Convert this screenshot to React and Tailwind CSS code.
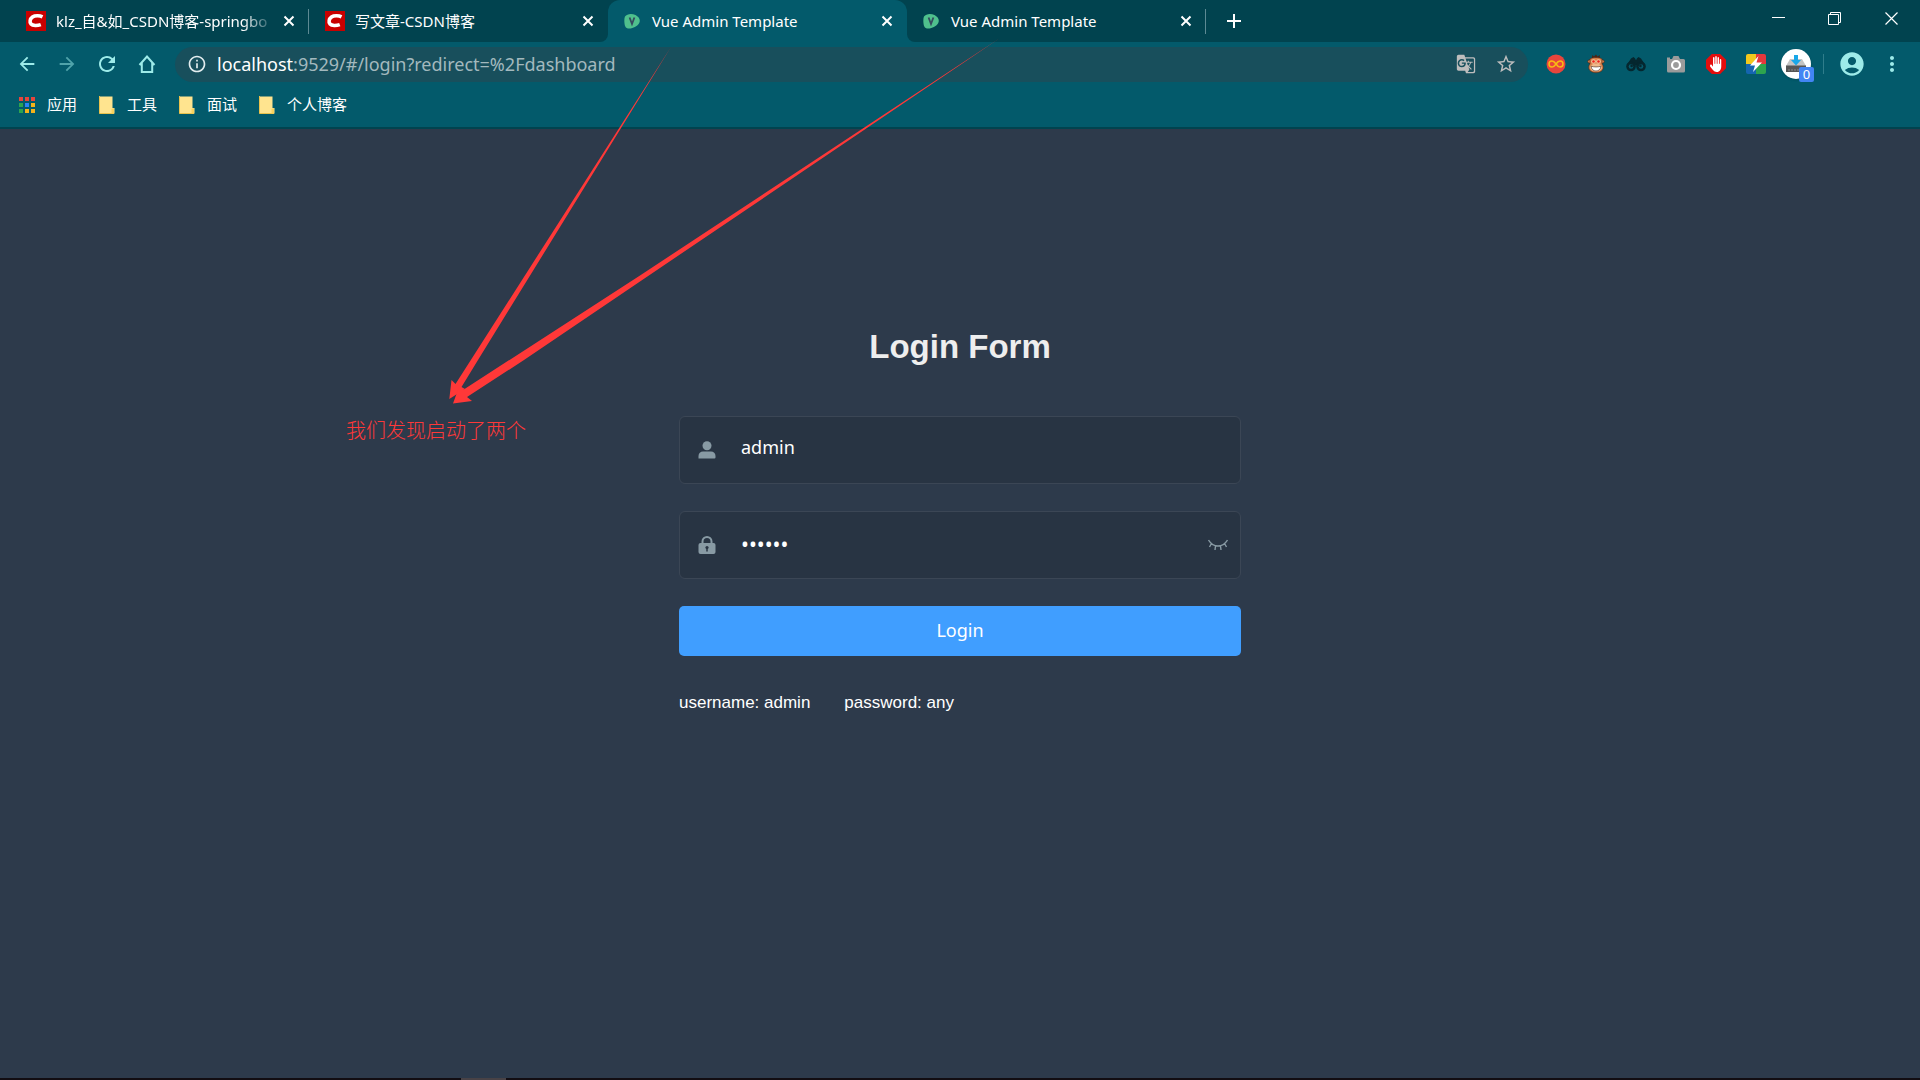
import React from "react";
import { MdArrowBack, MdArrowForward, MdRefresh, MdGTranslate, MdStarBorder, MdAccountCircle, MdMoreVert, MdInfoOutline } from "react-icons/md";
import { FaHand } from "react-icons/fa6";

function CsdnIcon() {
  return (
    <svg viewBox="0 0 20 20" className="size-5 shrink-0" aria-hidden="true">
      <rect width="20" height="20" fill="#c90000" />
      <path d="M16.500 5.800C14 4.600 9 4.300 6.500 6 4 7.800 3.300 11.200 5 13c1.700 2 6.500 1.800 9.800.6" fill="none" stroke="#fff" strokeWidth="3.600" />
    </svg>
  );
}

function VueIcon() {
  return (
    <svg viewBox="0 0 16 16" className="mr-0.5 size-4 shrink-0" aria-hidden="true">
      <path d="M1 3.500C3 .5 8 .2 11.500 2c2.500 1.300 4.500 3.500 4.300 6-.3 3.500-4 6-7.500 7-3 .9-6 .8-7-1.500C.2 11 0 5.500 1 3.500Z" fill="#4fc08d" />
      <path d="M5.600 4.500 8 11l2.400-6.500" fill="none" stroke="#35495e" strokeWidth="1.800" />
    </svg>
  );
}

function CloseIcon() {
  return (
    <svg viewBox="0 0 12 12" className="size-3" aria-hidden="true">
      <path d="m1.500 1.500 9 9m0-9-9 9" stroke="#fff" strokeWidth="2" />
    </svg>
  );
}

function Tab({ icon, title, active, divider, fade }) {
  return (
    <div className={"relative flex h-full w-[299px] shrink-0 items-center pl-4 " + (active ? "rounded-t-xl bg-[#035a6b]" : "")}>
      {icon}
      <button
        type="button"
        className={"ml-2.5 flex-1 text-left whitespace-nowrap text-white " + (fade ? "[mask-image:linear-gradient(to_right,#000_85%,transparent)]" : "")}
      >
        {title}
      </button>
      <button type="button" aria-label="Close tab" className="mr-2.5 ml-1 flex size-5 items-center justify-center">
        <CloseIcon />
      </button>
      {divider && <span className="absolute top-[9px] right-0 h-[25px] w-px bg-[#5d8a94]" />}
    </div>
  );
}

function TabStrip() {
  return (
    <div className="flex h-[42px] bg-[#035a6b] text-[15px]">
      <div className="flex shrink-0 rounded-br-lg bg-[#01434f] pl-2.5">
        <Tab icon={<CsdnIcon />} title="klz_自&如_CSDN博客-springbo" divider fade />
        <Tab icon={<CsdnIcon />} title="写文章-CSDN博客" />
      </div>
      <div className="shrink-0 bg-[#01434f]">
        <Tab icon={<VueIcon />} title="Vue Admin Template" active />
      </div>
      <div className="flex flex-1 rounded-bl-lg bg-[#01434f]">
        <Tab icon={<VueIcon />} title="Vue Admin Template" divider />
        <button type="button" aria-label="New tab" className="ml-4 flex w-6 items-center justify-center">
          <svg viewBox="0 0 16 16" className="size-4" aria-hidden="true">
            <path d="M8 1v14M1 8h14" stroke="#fff" strokeWidth="2" />
          </svg>
        </button>
        <div className="ml-auto flex h-9">
          <button type="button" aria-label="Minimize" className="flex w-14 items-center justify-center">
            <svg viewBox="0 0 13 13" className="size-[13px]" aria-hidden="true"><path d="M0 5.500h13" stroke="#fff" /></svg>
          </button>
          <button type="button" aria-label="Restore" className="flex w-14 items-center justify-center">
            <svg viewBox="0 0 13 13" className="size-[13px]" aria-hidden="true">
              <path d="M.5 2.500h10v10H.5zM2.500 2V.5h10v10H11" fill="none" stroke="#fff" />
            </svg>
          </button>
          <button type="button" aria-label="Close window" className="flex w-[58px] items-center justify-center">
            <svg viewBox="0 0 13 13" className="size-[13px]" aria-hidden="true"><path d="m.5.5 12 12m0-12-12 12" stroke="#fff" strokeWidth="1.200" /></svg>
          </button>
        </div>
      </div>
    </div>
  );
}

function NavButton({ label, children }) {
  return (
    <button type="button" aria-label={label} className="flex size-10 shrink-0 items-center justify-center text-[#9debe9]">
      {children}
    </button>
  );
}

function InfinityIcon() {
  return (
    <svg viewBox="0 0 20 20" className="size-5" aria-hidden="true">
      <circle cx="10" cy="10" r="9.500" fill="#e8453c" />
      <path d="M10 10C8.500 7.800 7.400 7 6 7a3 3 0 0 0 0 6c1.400 0 2.500-.8 4-3s2.600-3 4-3a3 3 0 0 1 0 6c-1.400 0-2.500-.8-4-3Z" fill="none" stroke="#f9bd12" strokeWidth="1.500" />
    </svg>
  );
}

function MonkeyIcon() {
  return (
    <svg viewBox="0 0 20 20" className="size-5" aria-hidden="true">
      <path d="m6 4 0-3 2 1.500L10 .5l1.500 2 2.500-1.500-.5 3Z" fill="#4a2515" />
      <circle cx="3.500" cy="7.500" r="1.700" fill="#e08a55" stroke="#4a2515" strokeWidth=".7" />
      <circle cx="16.500" cy="7.500" r="1.700" fill="#e08a55" stroke="#4a2515" strokeWidth=".7" />
      <path d="M4 5c2-2 10-2 12 0v5c2 2 1.500 5.500-.5 7-3 2.200-8 2.200-11 0-2-1.500-2.500-5-.5-7Z" fill="#d98049" stroke="#4a2515" strokeWidth=".6" />
      <circle cx="7.500" cy="7.500" r="2.300" fill="#f5c9a3" />
      <circle cx="12.500" cy="7.500" r="2.300" fill="#f5c9a3" />
      <ellipse cx="10" cy="13.500" rx="6" ry="4" fill="#f0b98c" />
      <circle cx="7.500" cy="7.500" r="1.300" fill="#f0221b" />
      <circle cx="12.500" cy="7.500" r="1.300" fill="#f0221b" />
      <path d="M5 12.200c3 1 7 1 10 0-.5 3.300-2.500 4.800-5 4.800s-4.500-1.500-5-4.800Z" fill="#fff" stroke="#4a2515" strokeWidth=".6" />
    </svg>
  );
}

function BinocularsIcon() {
  return (
    <svg viewBox="0 0 20 16" className="h-4 w-5" aria-hidden="true">
      <path d="M5 2.500 7.500 1l1.700 1.500v1h1.600v-1L12.500 1 15 2.500l4 6v4h-7l-1-3H9l-1 3H1v-4Z" fill="#05272f" />
      <circle cx="5" cy="10.500" r="4.800" fill="#05272f" />
      <circle cx="15" cy="10.500" r="4.800" fill="#05272f" />
      <circle cx="5" cy="10.500" r="2.300" fill="#075a6c" />
      <circle cx="15" cy="10.500" r="2.300" fill="#075a6c" />
      <circle cx="5.600" cy="9.900" r="1.300" fill="#05272f" />
      <circle cx="14.400" cy="9.900" r="1.300" fill="#05272f" />
    </svg>
  );
}

function CameraIcon() {
  return (
    <svg viewBox="0 0 20 18" className="h-[18px] w-5" aria-hidden="true">
      <path d="M1 5V2.500h3V4h2l1.500-3h5L14 4h3.500A1.500 1.500 0 0 1 19 5.500V16a1.500 1.500 0 0 1-1.500 1.500h-15A1.500 1.500 0 0 1 1 16Z" fill="#9b9b9b" />
      <circle cx="10" cy="10" r="4" fill="#9b9b9b" stroke="#fff" strokeWidth="2.200" />
    </svg>
  );
}

function StopIcon() {
  return (
    <span className="flex size-5 items-center justify-center bg-[#e40d0d] [clip-path:polygon(29%_0,71%_0,100%_29%,100%_71%,71%_100%,29%_100%,0_71%,0_29%)]">
      <FaHand className="h-4 w-3 text-white" preserveAspectRatio="none" />
    </span>
  );
}

function BoltIcon() {
  return (
    <svg viewBox="0 0 20 20" className="size-5" aria-hidden="true">
      <clipPath id="bolt-tile"><rect width="20" height="20" rx="2" /></clipPath>
      <g clipPath="url(#bolt-tile)">
        <path d="M0 0h10v10H0z" fill="#f2c81d" />
        <path d="M10 0h10v10H10z" fill="#e5373c" />
        <path d="M0 10h10v10H0z" fill="#1565b0" />
        <path d="M10 10h10v10H10z" fill="#2da44e" />
      </g>
      <path d="M12.500 2 4 11.500h5L7 18l9-9.500h-5.500Z" fill="#fff" />
    </svg>
  );
}

function DownloadIcon() {
  return (
    <span className="relative flex size-[30px] items-center justify-center rounded-full bg-white shadow">
      <svg viewBox="0 0 20 18" className="h-[18px] w-5" aria-hidden="true">
        <path d="M4 4h12l4 7H0Z" fill="#c4c4c4" />
        <path d="M0 10.500h20V17H0z" fill="#555" />
        <path d="M2 15h12" stroke="#8b8b8b" strokeDasharray="2 1" />
        <path d="M8 0h4v5h3l-5 5.500L5 5h3Z" fill="#19a7e8" />
      </svg>
      <span className="absolute top-[18px] left-[18px] flex h-[15px] w-[15px] items-center justify-center rounded-xs bg-[#4285f4] text-[13px] leading-none text-white">0</span>
    </span>
  );
}

const extensions = [
  ["Infinity", InfinityIcon],
  ["Monkey", MonkeyIcon],
  ["Binoculars", BinocularsIcon],
  ["Screenshot", CameraIcon],
  ["Blocker", StopIcon],
  ["Speed", BoltIcon],
  ["Downloads", DownloadIcon],
];

function Toolbar() {
  return (
    <div className="flex h-[46px] items-center bg-[#035a6b] pr-2 pb-0.5 pl-[7px]">
      <NavButton label="Back"><MdArrowBack className="size-[22px]" /></NavButton>
      <NavButton label="Forward"><MdArrowForward className="size-[22px] opacity-50" /></NavButton>
      <NavButton label="Reload"><MdRefresh className="size-6" /></NavButton>
      <NavButton label="Home">
        <svg viewBox="0 0 20 20" className="size-5" aria-hidden="true">
          <path d="M2.500 11 10 2.500l7.500 8.500M4.800 9v9h10.400V9" fill="none" stroke="currentColor" strokeWidth="2" />
        </svg>
      </NavButton>
      <div className="ml-2 flex h-[35px] flex-1 items-center rounded-full bg-[#184f5c] pl-3">
        <MdInfoOutline className="size-5 shrink-0 text-[#e3edef]" />
        <button type="button" className="ml-2.5 flex-1 text-left text-lg whitespace-nowrap text-[#a3b9be]">
          <span className="text-white">localhost</span>:9529/#/login?redirect=%2Fdashboard
        </button>
        <button type="button" aria-label="Translate" className="flex size-10 items-center justify-center text-[#bdbdbd]"><MdGTranslate className="size-5" /></button>
        <button type="button" aria-label="Bookmark" className="mr-0.5 flex size-10 items-center justify-center text-[#bdbdbd]"><MdStarBorder className="size-[22px]" /></button>
      </div>
      <div className="ml-2 flex items-center">
        {extensions.map(([name, Icon]) => (
          <button key={name} type="button" aria-label={name} className="flex size-10 items-center justify-center"><Icon /></button>
        ))}
      </div>
      <span className="mr-2 ml-[7px] h-5 w-px bg-[#2f7d8b]" />
      <NavButton label="Profile"><MdAccountCircle className="size-7" /></NavButton>
      <NavButton label="Menu"><MdMoreVert className="size-6" /></NavButton>
    </div>
  );
}

const appColors = ["#e8453c", "#e8453c", "#e8453c", "#2da44e", "#2a84f5", "#f4b31a", "#2da44e", "#f4b31a", "#f4b31a"];

function AppsIcon() {
  return (
    <span className="grid size-4 grid-cols-3 gap-0.5">
      {appColors.map((color, i) => (
        <span key={i} style={{ background: color }} />
      ))}
    </span>
  );
}

function FolderIcon() {
  return (
    <svg viewBox="0 0 16 18" className="h-[18px] w-4" aria-hidden="true">
      <path d="M.5.500h13v11.500l2 0v5.500H.5z" fill="#ffe48f" />
      <path d="M.5 0v17.500H15" fill="none" stroke="#e9c24d" />
      <path d="M12.500 17.500V13l2.500-1v5.500Z" fill="#f7d260" />
    </svg>
  );
}

function BookmarksBar() {
  return (
    <nav className="flex h-[41px] items-center gap-[22px] border-b-2 border-[#01434f] bg-[#035a6b] pb-1.5 pl-[19px] text-[15px] text-white">
      <a href="#apps" className="flex items-center gap-3"><AppsIcon />应用</a>
      <a href="#tools" className="flex items-center gap-3"><FolderIcon />工具</a>
      <a href="#interview" className="flex items-center gap-3"><FolderIcon />面试</a>
      <a href="#blog" className="flex items-center gap-3"><FolderIcon />个人博客</a>
    </nav>
  );
}

function Field({ icon, children }) {
  return (
    <div className="mb-[27px] flex h-[68px] items-center rounded-md border border-[#3b4655] bg-[#283443] pr-3 pb-0.5 pl-[18px] text-[#889aa4]">
      {icon}
      {children}
    </div>
  );
}

function LoginForm() {
  return (
    <form className="mx-auto w-full max-w-[562px] pt-[193px]" onSubmit={(e) => e.preventDefault()}>
      <h1 className="mb-[45px] text-center font-['Liberation_Sans',Arial,sans-serif] text-[33px] leading-[49px] font-bold text-[#eee]">Login Form</h1>
      <Field
        icon={
          <svg viewBox="0 0 18 18" className="mt-0.5 size-[18px] shrink-0" fill="currentColor" aria-hidden="true">
            <circle cx="9" cy="4.800" r="4.500" />
            <path d="M.5 17.500v-2.500c0-3 2-4.500 4.500-4.500h8c2.500 0 4.500 1.500 4.500 4.500v1.500a1 1 0 0 1-1 1Z" />
          </svg>
        }
      >
        <input type="text" aria-label="Username" defaultValue="admin" className="mb-1 ml-[25px] h-14 min-w-0 flex-1 bg-transparent text-lg text-white outline-none" />
      </Field>
      <Field
        icon={
          <svg viewBox="0 0 18 18" className="mt-0.5 size-[18px] shrink-0" aria-hidden="true">
            <path d="M4.500 8V5.500a4.500 4.500 0 0 1 9 0V8" fill="none" stroke="currentColor" strokeWidth="2" />
            <rect x=".5" y="7" width="17" height="11" rx="2" fill="currentColor" />
            <path d="M9 11v4.500" stroke="#283443" strokeWidth="1.500" />
            <circle cx="9" cy="11.500" r="1.600" fill="#283443" />
          </svg>
        }
      >
        <input type="password" aria-label="Password" defaultValue="111111" className="ml-[25px] h-14 min-w-0 flex-1 bg-transparent text-[21px] text-white outline-none" />
        <button type="button" aria-label="Show password" className="mt-0.5">
          <svg viewBox="0 0 20 12" className="h-3 w-5" fill="none" stroke="currentColor" strokeWidth="1.400" aria-hidden="true">
            <path d="M.5 1C3 5 6.500 7 10 7s7-2 9.500-6M3.500 4.500 1.500 8M7.500 7 7 11M12.500 7l.5 4M16.500 4.500l2 3.500" />
          </svg>
        </button>
      </Field>
      <button type="submit" className="h-[50px] w-full rounded-[5px] bg-[#409eff] pb-0.5 text-lg text-white">Login</button>
      <div className="mt-[35px] flex gap-[34px] font-['Liberation_Sans',Arial,sans-serif] text-[17px] leading-6 text-white">
        <span>username: admin</span>
        <span>password: any</span>
      </div>
    </form>
  );
}

function Annotation() {
  return (
    <div className="pointer-events-none absolute top-0 left-0 text-[#ff3838]">
      <svg width="1010" height="417" viewBox="0 0 1010 417" fill="currentColor" aria-hidden="true">
        <path d="M671 47 455.500 384 451.500 380 449.300 399 465 389 461.500 387 478 360Z" />
        <path d="M1000 38 640 275.500 463 390 459 387 453 403.500 472 401 467 397 524 360 640 281.500Z" />
      </svg>
      <p className="ml-[346px] text-xl leading-7 font-light">我们发现启动了两个</p>
    </div>
  );
}

export default function App() {
  return (
    <div className="relative flex min-h-screen flex-col bg-[#2d3a4b] font-['Noto_Sans','Noto_Sans_CJK_SC',sans-serif]">
      <header>
        <TabStrip />
        <Toolbar />
        <BookmarksBar />
      </header>
      <main className="flex-1">
        <LoginForm />
      </main>
      <footer className="h-0.5 bg-[#120d12] pl-[461px]">
        <div className="h-full w-[45px] bg-[#484246]" />
      </footer>
      <Annotation />
    </div>
  );
}
